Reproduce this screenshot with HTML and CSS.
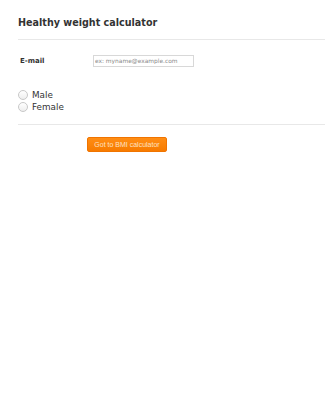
FILE: index.html
```html
<!DOCTYPE html>
<html lang="en">
<head>
    <meta charset="UTF-8">
    <meta name="viewport" content="width=device-width, initial-scale=1.0">
    <title>Healthy weight calculator</title>
    <link rel="stylesheet" href="styles.css">
</head>
<body>

    <div class="form">
        <!-- Header -->
        <div class="form-header">
            <h2>Healthy weight calculator</h2>
        </div>

        <!-- Email row -->
        <div class="form-line">
            <label class="form-label" for="email">E-mail</label>
            <input type="email" id="email" class="form-input" placeholder="ex: myname@example.com" />
        </div>

        <!-- Gender -->
        <div class="form-radios">
            <label class="radio-item"><input type="radio" name="gender" value="male" /><span>Male</span></label>
            <label class="radio-item"><input type="radio" name="gender" value="female" /><span>Female</span></label>
        </div>

        <!-- Submit -->
        <div class="form-buttons">
            <button type="button" class="submit-button">Got to BMI calculator</button>
        </div>
    </div>

</body>
</html>
```

FILE: styles.css
```css
body {
    font-family: "DejaVu Sans", Verdana, sans-serif;
    background-color: #ffffff;
    margin: 0;
    padding: 0;
    color: #333;
}

.form {
    padding-left: 18px;
}

.form-header {
    padding-top: 17px;
    padding-bottom: 11px;
    border-bottom: 1px solid #e8e8e8;
}

.form-header h2 {
    margin: 0;
    font-size: 9.6px;
    font-weight: bold;
    color: #333;
    line-height: 11px;
}

.form-line {
    display: flex;
    align-items: center;
    padding-top: 15px;
    padding-left: 2px;
}

.form-label {
    width: 73px;
    font-size: 7px;
    font-weight: bold;
    color: #333;
}

.form-input {
    width: 101px;
    height: 12px;
    box-sizing: border-box;
    border: 1px solid #d8d8d8;
    padding: 0 1px;
    margin: 0;
    font-family: "DejaVu Sans", Verdana, sans-serif;
    font-size: 5.9px;
    color: #555;
}

.form-input::placeholder {
    color: #8a8a8a;
}

.form-radios {
    display: flex;
    flex-direction: column;
    gap: 3px;
    padding-top: 23px;
    padding-bottom: 13px;
    border-bottom: 1px solid #e8e8e8;
}

.radio-item {
    display: flex;
    align-items: center;
    font-size: 8.8px;
    color: #333;
    height: 9px;
}

.radio-item input {
    width: 10px;
    height: 10px;
    margin: 0 4px 0 0;
    appearance: none;
    border: 1px solid #c8c8c8;
    border-radius: 50%;
    background: linear-gradient(#fff, #eee);
}

.form-buttons {
    display: flex;
    padding-top: 12px;
    padding-left: 69px;
}

.submit-button {
    width: 80px;
    height: 15px;
    padding: 0;
    font-family: "Liberation Sans", Arial, sans-serif;
    font-size: 7px;
    color: #fde2c4;
    background: linear-gradient(#ff8d14, #f77b00);
    border: 1px solid #f07400;
    border-radius: 2px;
    cursor: pointer;
}
```
